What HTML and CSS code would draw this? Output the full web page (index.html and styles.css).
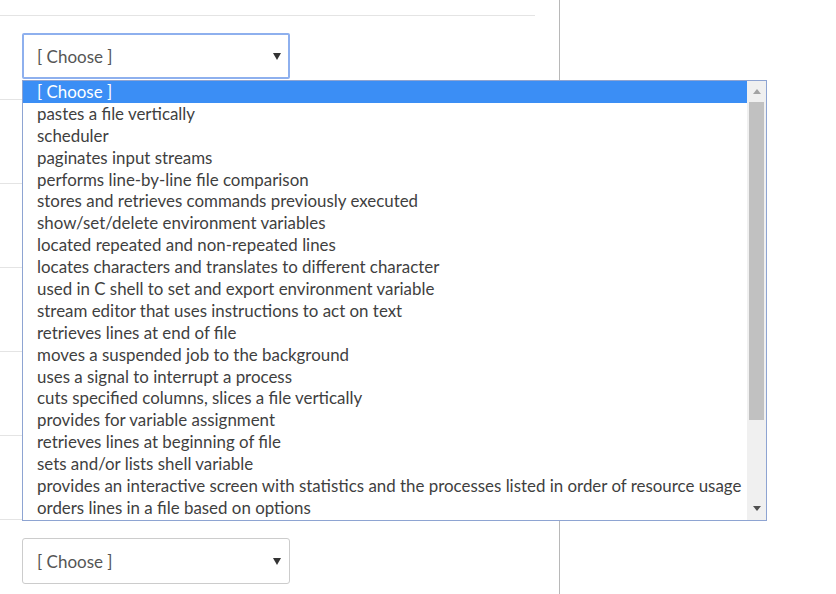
FILE: index.html
```html
<!DOCTYPE html>
<html lang="en">
<head>
<meta charset="UTF-8">
<title>Quiz - match the command</title>
<link rel="stylesheet" href="styles.css">
</head>
<body>

<div class="page">
    <div class="questions">
        <div class="row">
            <div class="picker focused">[ Choose ]<span class="caret"></span></div>

            <!-- open option list, drawn over the rows below -->
            <div class="listbox">
                <ul class="options">
                    <li class="selected">[ Choose ]</li>
                    <li>pastes a file vertically</li>
                    <li>scheduler</li>
                    <li>paginates input streams</li>
                    <li>performs line-by-line file comparison</li>
                    <li>stores and retrieves commands previously executed</li>
                    <li>show/set/delete environment variables</li>
                    <li>located repeated and non-repeated lines</li>
                    <li>locates characters and translates to different character</li>
                    <li>used in C shell to set and export environment variable</li>
                    <li>stream editor that uses instructions to act on text</li>
                    <li>retrieves lines at end of file</li>
                    <li>moves a suspended job to the background</li>
                    <li>uses a signal to interrupt a process</li>
                    <li>cuts specified columns, slices a file vertically</li>
                    <li>provides for variable assignment</li>
                    <li>retrieves lines at beginning of file</li>
                    <li>sets and/or lists shell variable</li>
                    <li>provides an interactive screen with statistics and the processes listed in order of resource usage</li>
                    <li>orders lines in a file based on options</li>
                </ul>
                <div class="scrollbar">
                    <span class="arrow up"></span>
                    <span class="thumb"></span>
                    <span class="arrow down"></span>
                </div>
            </div>
        </div>
        <div class="row"></div>
        <div class="row"></div>
        <div class="row"></div>
        <div class="row"></div>
        <div class="row"></div>
        <div class="row">
            <div class="picker">[ Choose ]<span class="caret"></span></div>
        </div>
    </div>
    <div class="side"></div>
</div>

</body>
</html>
```

FILE: styles.css
```css
body {
    margin: 0;
    background: #fff;
    font-family: Lato, "Open Sans", sans-serif;
    color: #444;
    overflow: hidden;
}
.page {
    display: flex;
    height: 594px;
}
.questions {
    width: 535px;
    padding-top: 15px;
}
.row {
    position: relative;
    height: 83px;
    border-top: 1px solid #e4e4e4;
}
.picker {
    position: relative;
    box-sizing: border-box;
    width: 268px;
    height: 46px;
    margin: 18px 0 0 22px;
    padding-left: 14px;
    border: 1px solid #ccc;
    border-radius: 3px;
    line-height: 46px;
    font-size: 17px;
    color: #555;
}
.picker.focused {
    border: 2px solid #8eb0ee;
    padding-left: 13px;
    margin-top: 17px;
    line-height: 44px;
    border-radius: 2px;
}
.caret {
    position: absolute;
    right: 8px;
    top: 19px;
    width: 0;
    height: 0;
    border-left: 4px solid transparent;
    border-right: 4px solid transparent;
    border-top: 7px solid #333;
}
.focused .caret {
    top: 18px;
    right: 7px;
}
.side {
    margin-left: 24px;
    border-left: 1px solid #b8b8b8;
}
.listbox {
    position: absolute;
    top: 64px;
    left: 22px;
    width: 745px;
    height: 441px;
    box-sizing: border-box;
    border: 1px solid #8ea4d2;
    background: #fff;
    display: flex;
    z-index: 2;
}
.options {
    flex: 1;
    margin: 0;
    padding: 0;
    list-style: none;
    overflow: hidden;
    font-size: 16.9px;
    color: #3f3f3f;
}
.options li {
    height: 21.9px;
    line-height: 21px;
    padding-left: 14px;
    white-space: nowrap;
}
.options li.selected {
    background-color: #3b8ef5;
    color: #fff;
}
.scrollbar {
    width: 19px;
    background: #f0f0f0;
    display: flex;
    flex-direction: column;
    align-items: center;
}
.arrow {
    width: 0;
    height: 0;
    border-left: 4px solid transparent;
    border-right: 4px solid transparent;
}
.arrow.up {
    margin-top: 8px;
    border-bottom: 5px solid #a3a3a3;
}
.arrow.down {
    margin-top: auto;
    margin-bottom: 9px;
    border-top: 5px solid #505050;
}
.thumb {
    width: 15px;
    height: 318px;
    margin-top: 8px;
    background: #c1c1c1;
}
```
